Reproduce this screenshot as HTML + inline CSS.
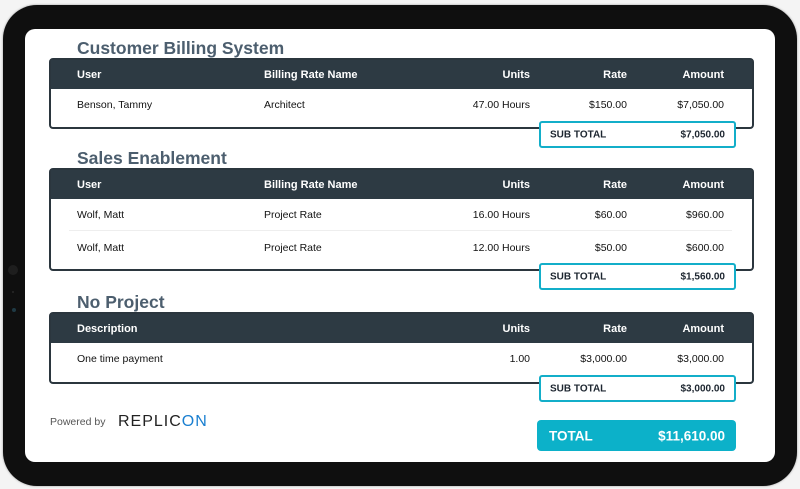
<!DOCTYPE html>
<html><head><style>
*{margin:0;padding:0;box-sizing:border-box}
body{width:800px;height:489px;background:#f4f4f4;position:relative;overflow:hidden;font-family:"Liberation Sans",sans-serif}
.frame{position:absolute;left:3px;top:5px;width:794px;height:481px;background:#0f0f0f;border-radius:34px;box-shadow:0 0 2px #999}
.screen{position:absolute;left:25px;top:29px;width:750px;height:433px;background:#fff;border-radius:10px}
.t{position:absolute;left:77px;font-size:17.5px;font-weight:bold;color:#4c5e6e}
.tbl{position:absolute;left:49px;width:705px;border:2px solid #2b363e;border-radius:4px;background:#fff}
.hd{background:#2d3a43;height:29px;position:relative;color:#fff;font-weight:bold;font-size:11px}
.row{position:relative;height:33px;font-size:10.5px;color:#111}
.c{position:absolute;top:50%;transform:translateY(-50%);white-space:nowrap}
.div{position:absolute;left:18px;right:20px;height:1px;background:#eee}
.sub{position:absolute;left:539px;width:197px;height:27px;border:2.5px solid #13aec9;border-radius:3px;background:#fff;font-size:10px;font-weight:bold;color:#1d2630}
.total{position:absolute;left:537px;top:420px;width:199px;height:31px;background:#0cb1c9;border-radius:4px;color:#fff;font-weight:bold;font-size:13.5px}
.cam{position:absolute;left:8px;top:265px;width:10px;height:10px;border-radius:50%;background:#1e1e1e}
</style></head><body>
<div class="frame"></div>
<div class="cam"></div>
<div style="position:absolute;left:12px;top:291px;width:2px;height:2px;background:#222"></div>
<div style="position:absolute;left:12px;top:308px;width:4px;height:4px;border-radius:50%;background:#1f3a44"></div>
<div class="screen"></div>

<div class="t" style="top:38px">Customer Billing System</div>
<div class="tbl" style="top:58px;height:71px">
 <div class="hd"><span class="c" style="left:26px">User</span><span class="c" style="left:213px">Billing Rate Name</span><span class="c" style="right:222px">Units</span><span class="c" style="right:125px">Rate</span><span class="c" style="right:28px">Amount</span></div>
 <div class="row" style="height:32px"><span class="c" style="left:26px">Benson, Tammy</span><span class="c" style="left:213px">Architect</span><span class="c" style="right:222px">47.00 Hours</span><span class="c" style="right:125px">$150.00</span><span class="c" style="right:28px">$7,050.00</span></div>
</div>
<div class="sub" style="top:121px"><span class="c" style="left:9px">SUB TOTAL</span><span class="c" style="right:9px">$7,050.00</span></div>

<div class="t" style="top:148px">Sales Enablement</div>
<div class="tbl" style="top:168px;height:103px">
 <div class="hd"><span class="c" style="left:26px">User</span><span class="c" style="left:213px">Billing Rate Name</span><span class="c" style="right:222px">Units</span><span class="c" style="right:125px">Rate</span><span class="c" style="right:28px">Amount</span></div>
 <div class="row" style="height:32px"><span class="c" style="left:26px">Wolf, Matt</span><span class="c" style="left:213px">Project Rate</span><span class="c" style="right:222px">16.00 Hours</span><span class="c" style="right:125px">$60.00</span><span class="c" style="right:28px">$960.00</span><div class="div" style="bottom:0"></div></div>
 <div class="row"><span class="c" style="left:26px">Wolf, Matt</span><span class="c" style="left:213px">Project Rate</span><span class="c" style="right:222px">12.00 Hours</span><span class="c" style="right:125px">$50.00</span><span class="c" style="right:28px">$600.00</span></div>
</div>
<div class="sub" style="top:263px"><span class="c" style="left:9px">SUB TOTAL</span><span class="c" style="right:9px">$1,560.00</span></div>

<div class="t" style="top:292px">No Project</div>
<div class="tbl" style="top:312px;height:72px">
 <div class="hd"><span class="c" style="left:26px">Description</span><span class="c" style="right:222px">Units</span><span class="c" style="right:125px">Rate</span><span class="c" style="right:28px">Amount</span></div>
 <div class="row" style="height:32px"><span class="c" style="left:26px">One time payment</span><span class="c" style="right:222px">1.00</span><span class="c" style="right:125px">$3,000.00</span><span class="c" style="right:28px">$3,000.00</span></div>
</div>
<div class="sub" style="top:375px"><span class="c" style="left:9px">SUB TOTAL</span><span class="c" style="right:9px">$3,000.00</span></div>

<div style="position:absolute;left:50px;top:416px;font-size:10.5px;color:#555">Powered by</div>
<div style="position:absolute;left:118px;top:413px;font-size:16px;letter-spacing:1px;color:#222">REPLIC<span style="color:#1a7fd0">ON</span></div>

<div class="total"><span class="c" style="left:12px">TOTAL</span><span class="c" style="right:11px">$11,610.00</span></div>
</body></html>
